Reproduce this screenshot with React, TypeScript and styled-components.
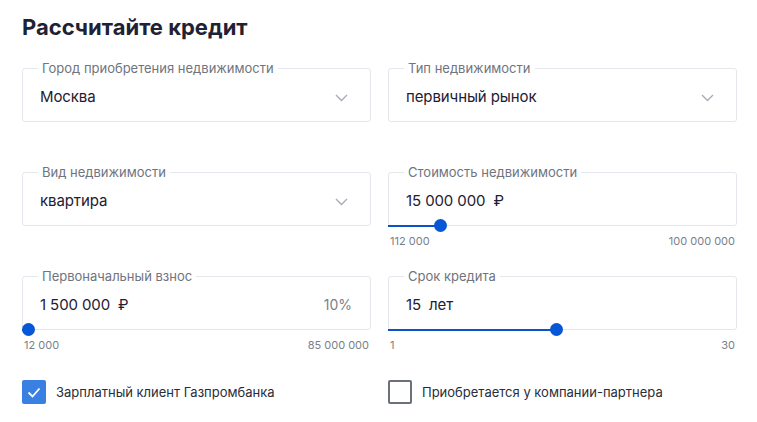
import React, { ReactElement } from 'react';
import styled, { createGlobalStyle } from 'styled-components';

const GlobalStyle = createGlobalStyle`
  html, body {
    margin: 0;
    padding: 0;
    background: #ffffff;
  }
  body {
    font-family: Inter, "Noto Sans", sans-serif;
    color: #1d2030;
  }
`;

const Page = styled.main`
  width: 757px;
  padding: 12px 20px 0 22px;
  box-sizing: border-box;
`;

const Title = styled.h1`
  margin: 0 0 26px;
  font-size: 22px;
  line-height: 30px;
  font-weight: 700;
  color: #1f2235;
`;

const Grid = styled.div`
  display: grid;
  grid-template-columns: 349px 349px;
  column-gap: 17px;
  grid-auto-rows: 104px;
`;

const Cell = styled.div`
  display: flex;
  flex-direction: column;
`;

const Box = styled.div`
  position: relative;
  height: 54px;
  box-sizing: border-box;
  border: 1px solid #e4e7eb;
  border-radius: 3px;
  padding: 17px 18px 0 17px;
  display: flex;
  align-items: flex-start;
  justify-content: space-between;
`;

const Label = styled.span`
  position: absolute;
  top: -8px;
  left: 15px;
  padding: 0 4px;
  background: #ffffff;
  font-size: 13px;
  line-height: 15px;
  color: #6f7480;
`;

const Value = styled.span`
  font-size: 15px;
  line-height: 22px;
  color: #1d2030;
  letter-spacing: -0.1px;
`;

const Unit = styled.span`
  margin-left: 8px;
`;

const Suffix = styled.span`
  font-size: 14px;
  line-height: 22px;
  color: #7a7f8a;
`;

const Chevron = styled.svg`
  margin-top: 8px;
  margin-right: 4px;
`;

const Track = styled.div`
  position: absolute;
  left: -1px;
  right: -1px;
  bottom: -2px;
  height: 2px;
`;

const Fill = styled.div`
  position: absolute;
  left: 0;
  top: 0;
  height: 2px;
  background: #0b52c8;
`;

const Thumb = styled.div`
  position: absolute;
  top: -6px;
  width: 13px;
  height: 13px;
  margin-left: -6px;
  border-radius: 50%;
  background: #0657d8;
`;

const Ticks = styled.div`
  display: flex;
  justify-content: space-between;
  margin-top: 8px;
  padding: 0 2px;
  font-size: 11px;
  line-height: 14px;
  color: #7a7f8a;
`;

const Checks = styled.div`
  display: grid;
  grid-template-columns: 366px 349px;
  align-items: center;
`;

const CheckLabel = styled.label`
  display: flex;
  align-items: center;
  gap: 10px;
  font-size: 13px;
  color: #2a2d38;
`;

const CheckBox = styled.span<{ $checked: boolean }>`
  width: 24px;
  height: 24px;
  box-sizing: border-box;
  border-radius: 2px;
  display: flex;
  align-items: center;
  justify-content: center;
  background: ${({ $checked }) => ($checked ? '#3a80e2' : '#ffffff')};
  border: ${({ $checked }) => ($checked ? 'none' : '2px solid #6c7079')};
`;

const ChevronIcon = (): ReactElement => (
  <Chevron width="13" height="8" viewBox="0 0 13 8">
    <path d="M1 1 L6.5 6.5 L12 1" fill="none" stroke="#a7acb5" strokeWidth="1.4" />
  </Chevron>
);

interface SelectProps {
  label: string;
  value: string;
}

const SelectField = ({ label, value }: SelectProps): ReactElement => (
  <Cell>
    <Box>
      <Label>{label}</Label>
      <Value>{value}</Value>
      <ChevronIcon />
    </Box>
  </Cell>
);

interface SliderProps {
  label: string;
  value: string;
  unit: string;
  suffix?: string;
  min: number;
  max: number;
  current: number;
  minText: string;
  maxText: string;
}

const SliderField = ({
  label,
  value,
  unit,
  suffix,
  min,
  max,
  current,
  minText,
  maxText
}: SliderProps): ReactElement => {
  const pct = ((current - min) / (max - min)) * 100;
  return (
    <Cell>
      <Box>
        <Label>{label}</Label>
        <Value>
          {value}
          <Unit>{unit}</Unit>
        </Value>
        {suffix && <Suffix>{suffix}</Suffix>}
        <Track>
          <Fill style={{ width: `${pct}%` }} />
          <Thumb style={{ left: `${pct}%` }} />
        </Track>
      </Box>
      <Ticks>
        <span>{minText}</span>
        <span>{maxText}</span>
      </Ticks>
    </Cell>
  );
};

export default function App(): ReactElement {
  return (
    <Page>
      <GlobalStyle />
      <Title>Рассчитайте кредит</Title>
      <Grid>
        <SelectField label="Город приобретения недвижимости" value="Москва" />
        <SelectField label="Тип недвижимости" value="первичный рынок" />
        <SelectField label="Вид недвижимости" value="квартира" />
        <SliderField
          label="Стоимость недвижимости"
          value="15 000 000"
          unit="₽"
          min={112000}
          max={100000000}
          current={15000000}
          minText="112 000"
          maxText="100 000 000"
        />
        <SliderField
          label="Первоначальный взнос"
          value="1 500 000"
          unit="₽"
          suffix="10%"
          min={12000}
          max={85000000}
          current={1500000}
          minText="12 000"
          maxText="85 000 000"
        />
        <SliderField
          label="Срок кредита"
          value="15"
          unit="лет"
          min={1}
          max={30}
          current={15}
          minText="1"
          maxText="30"
        />
      </Grid>
      <Checks>
        <CheckLabel>
          <CheckBox $checked>
            <svg width="14" height="11" viewBox="0 0 14 11">
              <path d="M1.5 5.5 L5.5 9.5 L12.5 1.5" fill="none" stroke="#ffffff" strokeWidth="1.8" />
            </svg>
          </CheckBox>
          Зарплатный клиент Газпромбанка
        </CheckLabel>
        <CheckLabel>
          <CheckBox $checked={false} />
          Приобретается у компании-партнера
        </CheckLabel>
      </Checks>
    </Page>
  );
}
